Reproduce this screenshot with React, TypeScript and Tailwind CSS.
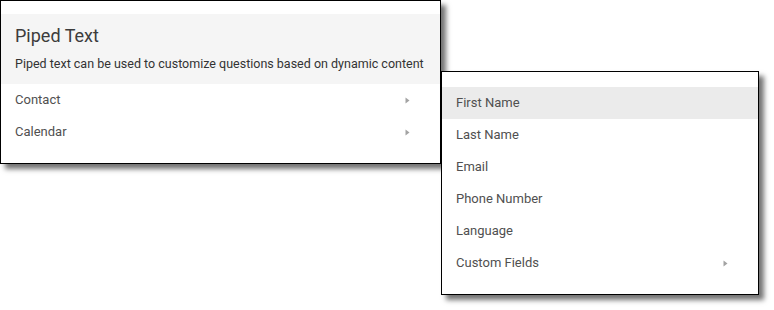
import { ReactNode } from 'react';

const font = { fontFamily: 'Roboto, "Liberation Sans", sans-serif' };

function Arrow() {
  return (
    <svg width="5" height="7" viewBox="0 0 5 7" className="shrink-0">
      <path d="M0.5 0.5 L4.5 3.5 L0.5 6.5 Z" fill="#a3a3a3" />
    </svg>
  );
}

function MenuItem({ label, sub, active }: { label: string; sub?: boolean; active?: boolean }) {
  return (
    <div
      className={`flex h-8 items-center justify-between pl-[14px] pr-[30px] text-[13px] text-[#505050] ${
        active ? 'bg-[#ebebeb]' : ''
      }`}
    >
      <span>{label}</span>
      {sub && <Arrow />}
    </div>
  );
}

function Panel({ className, children }: { className: string; children: ReactNode }) {
  return (
    <div className={`border border-black bg-white shadow-[5px_5px_5px_rgba(0,0,0,0.55)] ${className}`}>
      {children}
    </div>
  );
}

export default function App() {
  return (
    <div className="flex h-[310px] w-[774px] items-start bg-white" style={font}>
      {/* Piped text menu */}
      <Panel className="relative z-0 h-[164px] w-[441px] pt-[13px]">
        <div className="bg-[#f5f5f5] px-[14px] pt-[10px] pb-[10px]">
          <div className="text-[18px] leading-6 text-[#3c3c3c]">Piped Text</div>
          <div className="mt-[6px] whitespace-nowrap text-[12.5px] leading-5 text-[#333]">
            Piped text can be used to customize questions based on dynamic content
          </div>
        </div>
        <MenuItem label="Contact" sub />
        <MenuItem label="Calendar" sub />
      </Panel>

      {/* Contact submenu */}
      <Panel className="relative z-10 mt-[71px] h-[224px] w-[318px] py-[15px]">
        <MenuItem label="First Name" active />
        <MenuItem label="Last Name" />
        <MenuItem label="Email" />
        <MenuItem label="Phone Number" />
        <MenuItem label="Language" />
        <MenuItem label="Custom Fields" sub />
      </Panel>
    </div>
  );
}
